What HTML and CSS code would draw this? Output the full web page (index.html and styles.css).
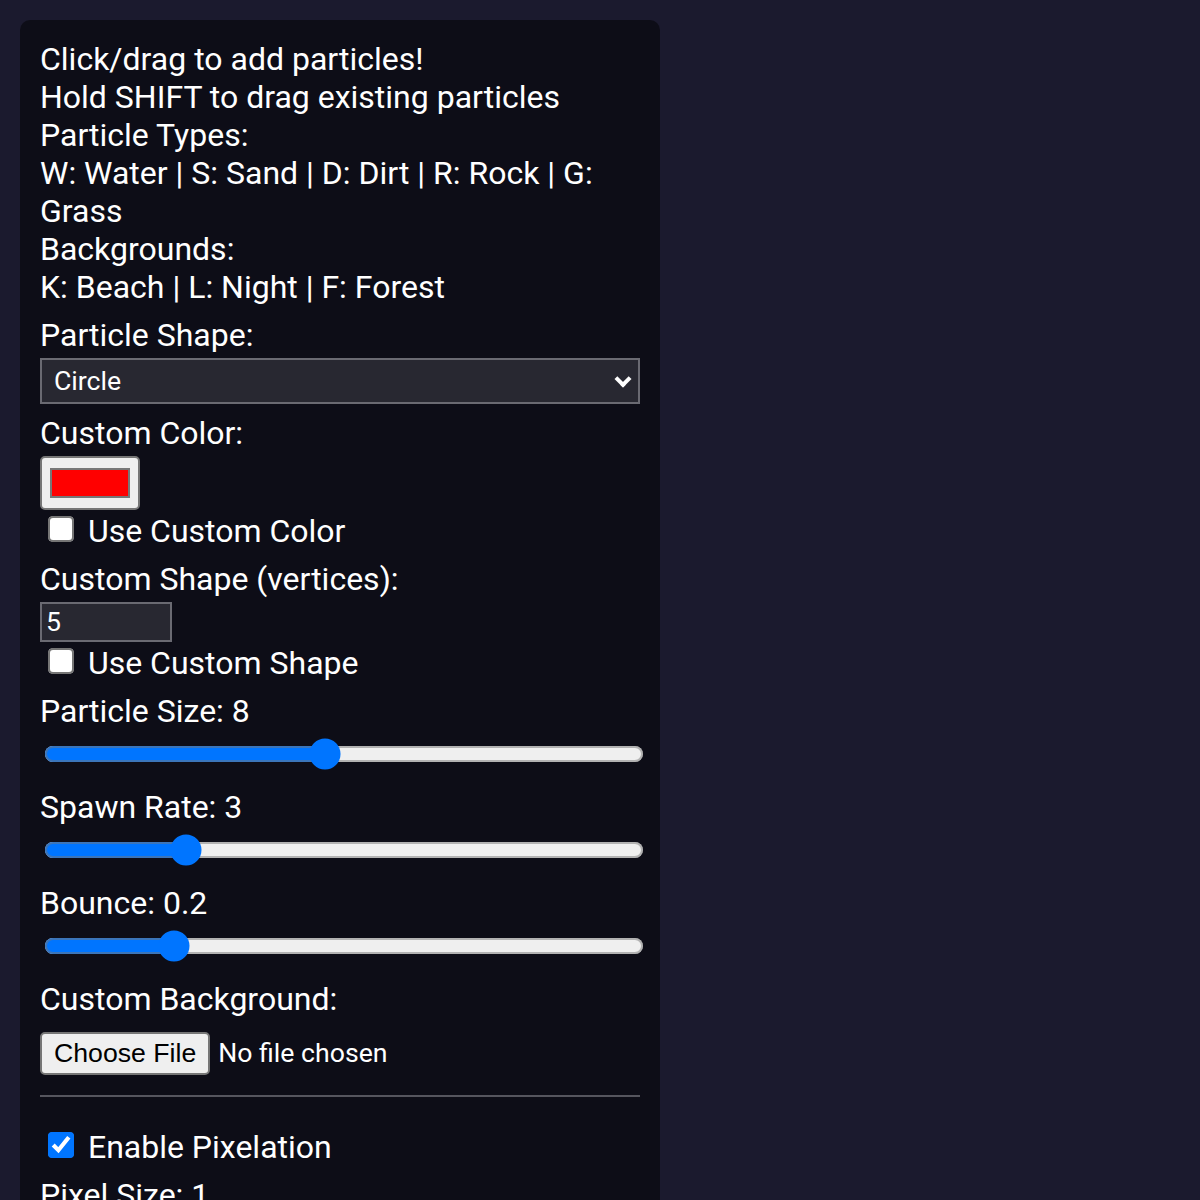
FILE: index.html
```html
<!DOCTYPE html>
<html>
<head>
<meta charset="utf-8">
<link rel="stylesheet" href="styles.css">
</head>
<body>
<div class="panel">
  <div class="help">Click/drag to add particles!<br>Hold SHIFT to drag existing particles<br>Particle Types:<br>W: Water | S: Sand | D: Dirt | R: Rock | G: Grass<br>Backgrounds:<br>K: Beach | L: Night | F: Forest</div>

  <div class="group">
    <label class="lbl" for="shape">Particle Shape:</label>
    <div class="sel-wrap">
      <select id="shape" class="sel">
        <option>Circle</option>
        <option>Square</option>
        <option>Triangle</option>
      </select>
    </div>
  </div>

  <div class="group">
    <label class="lbl" for="color">Custom Color:</label>
    <input id="color" class="color" type="color" value="#ff0000">
    <label class="check"><input type="checkbox"> Use Custom Color</label>
  </div>

  <div class="group">
    <label class="lbl" for="verts">Custom Shape (vertices):</label>
    <input id="verts" class="num" type="number" value="5">
    <label class="check"><input type="checkbox"> Use Custom Shape</label>
  </div>

  <div class="group">
    <label class="lbl">Particle Size: 8</label>
    <input class="range" type="range" min="1" max="16" value="8">
  </div>

  <div class="group">
    <label class="lbl">Spawn Rate: 3</label>
    <input class="range" type="range" min="1" max="10" value="3">
  </div>

  <div class="group">
    <label class="lbl">Bounce: 0.2</label>
    <input class="range" type="range" min="0" max="1" step="0.1" value="0.2">
  </div>

  <div class="group">
    <label class="lbl">Custom Background:</label>
    <input class="file" type="file">
  </div>

  <hr class="sep">

  <div class="group">
    <label class="check"><input type="checkbox" checked> Enable Pixelation</label>
  </div>

  <div class="group">
    <label class="lbl">Pixel Size: 1</label>
    <input class="range" type="range" min="1" max="10" value="1">
  </div>

  <div class="group">
    <label class="lbl">Pixel Blur: 0</label>
    <input class="range" type="range" min="0" max="10" value="0">
  </div>
</div>
</body>
</html>
```

FILE: styles.css
```css
html, body {
  margin: 0;
  padding: 0;
  background: #1b1a2e;
  height: 100%;
  overflow: hidden;
}

.panel {
  zoom: 2;
  margin: 10px;
  width: 300px;
  padding: 10px;
  background: rgba(0, 0, 0, 0.5);
  border-radius: 5px;
  color: #fff;
  font-family: Roboto, "Liberation Sans", sans-serif;
  font-size: 16px;
  line-height: 19px;
}

.group {
  margin-top: 5px;
}

.lbl {
  display: block;
}

.sel-wrap {
  position: relative;
  margin-top: 2px;
}

.sel-wrap::after {
  content: "";
  position: absolute;
  right: 5.5px;
  top: 7.5px;
  width: 4px;
  height: 4px;
  border-right: 2px solid #fff;
  border-bottom: 2px solid #fff;
  transform: rotate(45deg);
  pointer-events: none;
}

.sel {
  display: block;
  width: 100%;
  height: 23px;
  margin: 0;
  padding: 0 6px;
  -webkit-appearance: none;
  appearance: none;
  background: #282831;
  color: #fff;
  border: 1px solid #6a6a72;
  border-radius: 0;
  font-family: Roboto, "Liberation Sans", sans-serif;
  font-size: 13.333px;
}

.color {
  display: block;
  margin: 2px 0 0 0;
  font-family: Roboto, "Liberation Sans", sans-serif;
}

.check {
  display: block;
}

.check input {
  vertical-align: 0;
}

.num {
  display: block;
  width: 60px;
  margin-top: 2px;
  padding: 1px 2px;
  background: #282831;
  color: #fff;
  border: 1px solid #6a6a72;
  font-family: Roboto, "Liberation Sans", sans-serif;
  font-size: 13.333px;
}

.range {
  display: block;
  width: 100%;
  margin: 4px 2px 9px;
}

.file {
  display: block;
  margin-top: 7px;
  color: #fff;
  font-family: Roboto, "Liberation Sans", sans-serif;
  font-size: 13.333px;
}

.file::file-selector-button {
  padding: 1px 5px;
}

.sep {
  border: none;
  border-top: 1px solid #55555e;
  margin: 10px 0 14.5px;
}
```
